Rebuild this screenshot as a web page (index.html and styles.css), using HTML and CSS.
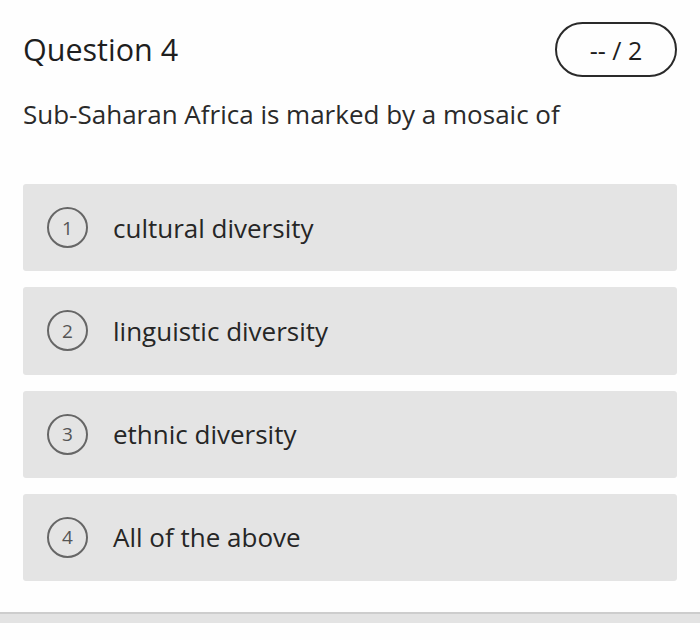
FILE: index.html
```html
<!DOCTYPE html>
<html>
<head>
<meta charset="utf-8">
<link rel="stylesheet" href="styles.css">
</head>
<body>
<div class="page">
  <div class="header">
    <h1 class="title">Question 4</h1>
    <div class="score">-- / 2</div>
  </div>
  <p class="prompt">Sub-Saharan Africa is marked by a mosaic of</p>
  <div class="options">
    <div class="option"><span class="num">1</span><span class="label">cultural diversity</span></div>
    <div class="option"><span class="num">2</span><span class="label">linguistic diversity</span></div>
    <div class="option"><span class="num">3</span><span class="label">ethnic diversity</span></div>
    <div class="option"><span class="num">4</span><span class="label">All of the above</span></div>
  </div>
  <div class="footer-line"></div>
</div>
</body>
</html>
```
FILE: styles.css
```css
html, body {
  margin: 0;
  padding: 0;
  background: #fefefe;
}
body {
  font-family: "Open Sans", "Noto Sans", sans-serif;
  color: #262626;
}
.page {
  width: 700px;
  height: 640px;
  overflow: hidden;
}
.header {
  display: flex;
  align-items: center;
  justify-content: space-between;
  padding: 22px 23px 0 23px;
  height: 55px;
}
.title {
  margin: 0;
  font-size: 30.5px;
  font-weight: 400;
  color: #1e1e1e;
  line-height: 1;
}
.score {
  box-sizing: border-box;
  width: 122px;
  height: 55px;
  border: 2px solid #2a2a2a;
  border-radius: 28px;
  display: flex;
  align-items: center;
  justify-content: center;
  font-size: 25px;
  color: #1e1e1e;
}
.prompt {
  margin: 20px 23px 0 23px;
  font-size: 26px;
  line-height: 34px;
  color: #2a2a2a;
}
.options {
  margin: 53px 23px 0 23px;
  display: flex;
  flex-direction: column;
  gap: 16px;
}
.option {
  height: 87.25px;
  background: #e4e4e4;
  border-radius: 3px;
  display: flex;
  align-items: center;
  padding-left: 24px;
  box-sizing: border-box;
}
.num {
  box-sizing: border-box;
  width: 41px;
  height: 41px;
  border: 2px solid #666;
  border-radius: 50%;
  display: flex;
  align-items: center;
  justify-content: center;
  font-size: 19px;
  color: #555;
  flex: none;
}
.label {
  margin-left: 25px;
  font-size: 26px;
  color: #262626;
}
.footer-line {
  margin-top: 31px;
  height: 9px;
  border-top: 2px solid #cdcdcd;
  background: #e3e3e3;
}
```
